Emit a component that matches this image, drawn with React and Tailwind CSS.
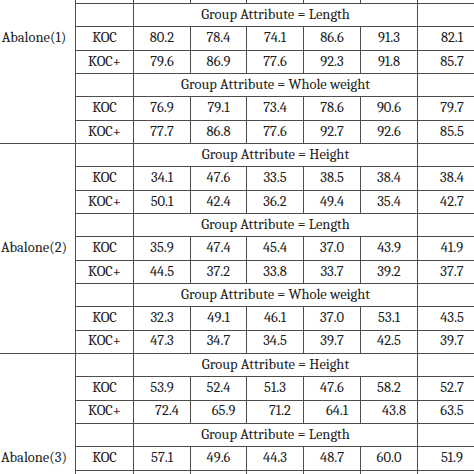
const groups = [
  {
    name: "Abalone(1)",
    blocks: [
      { attr: "Height", koc: ["78.5", "80.3", "75.2", "84.1", "90.2", "81.7"], plus: ["79.1", "85.4", "76.8", "91.5", "91.2", "84.8"] },
      { attr: "Length", koc: ["80.2", "78.4", "74.1", "86.6", "91.3", "82.1"], plus: ["79.6", "86.9", "77.6", "92.3", "91.8", "85.7"] },
      { attr: "Whole weight", koc: ["76.9", "79.1", "73.4", "78.6", "90.6", "79.7"], plus: ["77.7", "86.8", "77.6", "92.7", "92.6", "85.5"] },
    ],
  },
  {
    name: "Abalone(2)",
    blocks: [
      { attr: "Height", koc: ["34.1", "47.6", "33.5", "38.5", "38.4", "38.4"], plus: ["50.1", "42.4", "36.2", "49.4", "35.4", "42.7"] },
      { attr: "Length", koc: ["35.9", "47.4", "45.4", "37.0", "43.9", "41.9"], plus: ["44.5", "37.2", "33.8", "33.7", "39.2", "37.7"] },
      { attr: "Whole weight", koc: ["32.3", "49.1", "46.1", "37.0", "53.1", "43.5"], plus: ["47.3", "34.7", "34.5", "39.7", "42.5", "39.7"] },
    ],
  },
  {
    name: "Abalone(3)",
    blocks: [
      { attr: "Height", koc: ["53.9", "52.4", "51.3", "47.6", "58.2", "52.7"], plus: ["72.4", "65.9", "71.2", "64.1", "43.8", "63.5"], shifted: 5 },
      { attr: "Length", koc: ["57.1", "49.6", "44.3", "48.7", "60.0", "51.9"], plus: ["58.4", "50.2", "45.9", "49.3", "61.2", "53.0"] },
      { attr: "Whole weight", koc: ["55.2", "51.8", "49.7", "46.9", "57.4", "52.2"], plus: ["60.1", "54.3", "50.6", "52.8", "59.9", "55.5"] },
    ],
  },
];

const cell = "bg-white flex items-center justify-center";

function DataRow({ label, values, shifted = 0 }) {
  return (
    <>
      <div className={cell}>{label}</div>
      {values.map((v, i) => (
        <div key={i} className={`${cell} ${i < shifted ? "pl-[10px]" : ""}`}>
          {v}
        </div>
      ))}
    </>
  );
}

export default function App() {
  return (
    <div className="w-[474px] h-[474px] overflow-hidden bg-white">
      <div className="mt-[-66px] grid grid-cols-[75px_57px_56px_55px_56px_56px_56px_68px] auto-rows-[22.33px] gap-px bg-[#4d4d4d] font-serif [font-family:'Liberation_Serif',serif] text-[14.5px] leading-none text-[#1c1c1c]">
        {groups.map((g) => (
          <div key={g.name} className="contents">
            <div className={`${cell} col-start-1 row-span-9 pr-[7px]`}>{g.name}</div>
            {g.blocks.map((b) => (
              <div key={b.attr} className="contents">
                <div className="bg-white" />
                <div className={`${cell} col-span-5`}>Group Attribute = {b.attr}</div>
                <div className="bg-white" />
                <DataRow label="KOC" values={b.koc} />
                <DataRow label="KOC+" values={b.plus} shifted={b.shifted} />
              </div>
            ))}
          </div>
        ))}
      </div>
    </div>
  );
}
